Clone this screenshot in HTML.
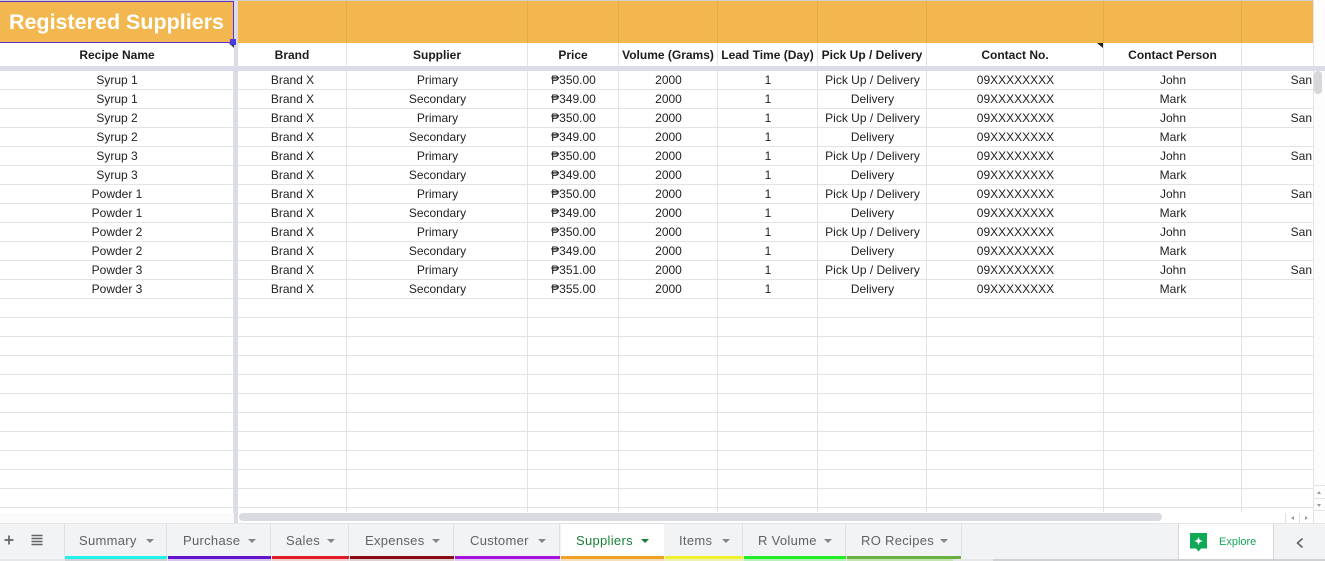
<!DOCTYPE html>
<html><head><meta charset="utf-8">
<style>
html,body{margin:0;padding:0;width:1325px;height:561px;overflow:hidden;background:#fff;font-family:"Liberation Sans",sans-serif}
.a{position:absolute}
#t{position:absolute;left:0;top:71px;border-collapse:separate;border-spacing:0;table-layout:fixed;width:1313px;font-size:12px;color:#222}
#t td{height:18px;padding:0 0 0 1px;border-bottom:1px solid #e2e3e3;border-right:1px solid #e2e3e3;text-align:center;line-height:18px;overflow:hidden;white-space:nowrap}
#t td.f{border-right:0;border-bottom:0;background:#dadce9;padding:0}
#t td.s{text-align:right;padding:0 1px 0 0;border-right:0}
#t tr.e td{height:5px;line-height:5px;border-bottom:0}
.v{position:absolute;width:1px}
.h{position:absolute;top:44px;height:23px;line-height:22px;font-size:12px;font-weight:bold;color:#1c1c1c;text-align:center;white-space:nowrap}
.tab{position:absolute;top:524px;height:32px;line-height:33px;color:#5f6368;background:#f1f3f4;border-right:1px solid #dfe1e4;white-space:nowrap;font-size:13px;letter-spacing:.3px;box-sizing:border-box}
.tab b{position:absolute;bottom:-3px;left:0;right:-1px;height:3px}
.tab i{position:absolute;top:15px;width:0;height:0;border-left:4px solid transparent;border-right:4px solid transparent;border-top:4px solid #80868b}
.tab span{position:absolute;top:0}
</style></head><body>
<div class="a" style="left:0;top:0;width:1313px;height:1px;background:#d0d0d0"></div>
<div class="a" style="left:0;top:1px;width:1313px;height:42px;background:#f2b84f"></div>
<div class="v" style="left:346px;top:1px;height:42px;background:#e0ac4b"></div>
<div class="v" style="left:527px;top:1px;height:42px;background:#e0ac4b"></div>
<div class="v" style="left:618px;top:1px;height:42px;background:#e0ac4b"></div>
<div class="v" style="left:717px;top:1px;height:42px;background:#e0ac4b"></div>
<div class="v" style="left:817px;top:1px;height:42px;background:#e0ac4b"></div>
<div class="v" style="left:926px;top:1px;height:42px;background:#e0ac4b"></div>
<div class="v" style="left:1103px;top:1px;height:42px;background:#e0ac4b"></div>
<div class="v" style="left:1241px;top:1px;height:42px;background:#e0ac4b"></div>

<div class="h" style="left:0;width:234px">Recipe Name</div>
<div class="h" style="left:238px;width:108px">Brand</div>
<div class="h" style="left:347px;width:180px">Supplier</div>
<div class="h" style="left:528px;width:90px">Price</div>
<div class="h" style="left:619px;width:98px">Volume (Grams)</div>
<div class="h" style="left:718px;width:99px">Lead Time (Day)</div>
<div class="h" style="left:818px;width:108px">Pick Up / Delivery</div>
<div class="h" style="left:927px;width:176px">Contact No.</div>
<div class="h" style="left:1104px;width:137px">Contact Person</div>
<div class="v" style="left:346px;top:43px;height:23px;background:#e2e3e3"></div>
<div class="v" style="left:527px;top:43px;height:23px;background:#e2e3e3"></div>
<div class="v" style="left:618px;top:43px;height:23px;background:#e2e3e3"></div>
<div class="v" style="left:717px;top:43px;height:23px;background:#e2e3e3"></div>
<div class="v" style="left:817px;top:43px;height:23px;background:#e2e3e3"></div>
<div class="v" style="left:926px;top:43px;height:23px;background:#e2e3e3"></div>
<div class="v" style="left:1103px;top:43px;height:23px;background:#e2e3e3"></div>
<div class="v" style="left:1241px;top:43px;height:23px;background:#e2e3e3"></div>
<div class="a" style="left:0;top:66px;width:1313px;height:5px;background:#dadce9"></div>

<table id="t"><colgroup><col style="width:234px"><col style="width:4px"><col style="width:109px"><col style="width:181px"><col style="width:91px"><col style="width:99px"><col style="width:100px"><col style="width:109px"><col style="width:177px"><col style="width:138px"><col style="width:71px"></colgroup>
<tr><td>Syrup 1</td><td class="f"></td><td>Brand X</td><td>Primary</td><td>₱350.00</td><td>2000</td><td>1</td><td>Pick Up / Delivery</td><td>09XXXXXXXX</td><td>John</td><td class="s">San</td></tr>
<tr><td>Syrup 1</td><td class="f"></td><td>Brand X</td><td>Secondary</td><td>₱349.00</td><td>2000</td><td>1</td><td>Delivery</td><td>09XXXXXXXX</td><td>Mark</td><td class="s"></td></tr>
<tr><td>Syrup 2</td><td class="f"></td><td>Brand X</td><td>Primary</td><td>₱350.00</td><td>2000</td><td>1</td><td>Pick Up / Delivery</td><td>09XXXXXXXX</td><td>John</td><td class="s">San</td></tr>
<tr><td>Syrup 2</td><td class="f"></td><td>Brand X</td><td>Secondary</td><td>₱349.00</td><td>2000</td><td>1</td><td>Delivery</td><td>09XXXXXXXX</td><td>Mark</td><td class="s"></td></tr>
<tr><td>Syrup 3</td><td class="f"></td><td>Brand X</td><td>Primary</td><td>₱350.00</td><td>2000</td><td>1</td><td>Pick Up / Delivery</td><td>09XXXXXXXX</td><td>John</td><td class="s">San</td></tr>
<tr><td>Syrup 3</td><td class="f"></td><td>Brand X</td><td>Secondary</td><td>₱349.00</td><td>2000</td><td>1</td><td>Delivery</td><td>09XXXXXXXX</td><td>Mark</td><td class="s"></td></tr>
<tr><td>Powder 1</td><td class="f"></td><td>Brand X</td><td>Primary</td><td>₱350.00</td><td>2000</td><td>1</td><td>Pick Up / Delivery</td><td>09XXXXXXXX</td><td>John</td><td class="s">San</td></tr>
<tr><td>Powder 1</td><td class="f"></td><td>Brand X</td><td>Secondary</td><td>₱349.00</td><td>2000</td><td>1</td><td>Delivery</td><td>09XXXXXXXX</td><td>Mark</td><td class="s"></td></tr>
<tr><td>Powder 2</td><td class="f"></td><td>Brand X</td><td>Primary</td><td>₱350.00</td><td>2000</td><td>1</td><td>Pick Up / Delivery</td><td>09XXXXXXXX</td><td>John</td><td class="s">San</td></tr>
<tr><td>Powder 2</td><td class="f"></td><td>Brand X</td><td>Secondary</td><td>₱349.00</td><td>2000</td><td>1</td><td>Delivery</td><td>09XXXXXXXX</td><td>Mark</td><td class="s"></td></tr>
<tr><td>Powder 3</td><td class="f"></td><td>Brand X</td><td>Primary</td><td>₱351.00</td><td>2000</td><td>1</td><td>Pick Up / Delivery</td><td>09XXXXXXXX</td><td>John</td><td class="s">San</td></tr>
<tr><td>Powder 3</td><td class="f"></td><td>Brand X</td><td>Secondary</td><td>₱355.00</td><td>2000</td><td>1</td><td>Delivery</td><td>09XXXXXXXX</td><td>Mark</td><td class="s"></td></tr>
<tr><td></td><td class="f"></td><td></td><td></td><td></td><td></td><td></td><td></td><td></td><td></td><td class="s"></td></tr>
<tr><td></td><td class="f"></td><td></td><td></td><td></td><td></td><td></td><td></td><td></td><td></td><td class="s"></td></tr>
<tr><td></td><td class="f"></td><td></td><td></td><td></td><td></td><td></td><td></td><td></td><td></td><td class="s"></td></tr>
<tr><td></td><td class="f"></td><td></td><td></td><td></td><td></td><td></td><td></td><td></td><td></td><td class="s"></td></tr>
<tr><td></td><td class="f"></td><td></td><td></td><td></td><td></td><td></td><td></td><td></td><td></td><td class="s"></td></tr>
<tr><td></td><td class="f"></td><td></td><td></td><td></td><td></td><td></td><td></td><td></td><td></td><td class="s"></td></tr>
<tr><td></td><td class="f"></td><td></td><td></td><td></td><td></td><td></td><td></td><td></td><td></td><td class="s"></td></tr>
<tr><td></td><td class="f"></td><td></td><td></td><td></td><td></td><td></td><td></td><td></td><td></td><td class="s"></td></tr>
<tr><td></td><td class="f"></td><td></td><td></td><td></td><td></td><td></td><td></td><td></td><td></td><td class="s"></td></tr>
<tr><td></td><td class="f"></td><td></td><td></td><td></td><td></td><td></td><td></td><td></td><td></td><td class="s"></td></tr>
<tr><td></td><td class="f"></td><td></td><td></td><td></td><td></td><td></td><td></td><td></td><td></td><td class="s"></td></tr>
<tr class="e"><td></td><td class="f"></td><td></td><td></td><td></td><td></td><td></td><td></td><td></td><td></td><td class="s"></td></tr>
</table>

<!-- freeze pane column -->
<div class="a" style="left:234px;top:1px;width:4px;height:42px;background:#dadce9"></div>
<div class="a" style="left:234px;top:43px;width:4px;height:480px;background:#dadce9"></div>

<!-- title cell -->
<div class="a" style="left:0;top:1px;width:233px;height:40px;border-top:1px solid #5b2fd0;border-bottom:1px solid #5b2fd0;border-right:1px solid #5b2fd0;background:#f2b84f;color:#fff;font-weight:bold;font-size:21.5px;line-height:41px;text-align:center;white-space:nowrap;box-sizing:content-box">Registered Suppliers</div>
<div class="a" style="left:230px;top:39px;width:6px;height:6px;background:#4d3be0;z-index:3"></div>
<div class="a" style="left:229px;top:43px;width:0;height:0;border-top:5px solid #333;border-left:5px solid transparent;z-index:2"></div>
<div class="a" style="left:1097px;top:43px;width:0;height:0;border-top:5px solid #222;border-left:6px solid transparent"></div>

<!-- bottom scroll area -->
<div class="a" style="left:0;top:513px;width:234px;height:10px;background:#fbfbfb"></div>
<div class="a" style="left:238px;top:512px;width:1075px;height:11px;background:#fff"></div>
<div class="a" style="left:239px;top:513px;width:923px;height:8px;border-radius:4px;background:#dadbe0"></div>

<!-- right scrollbar -->
<div class="a" style="left:1313px;top:0;width:12px;height:523px;background:#fdfdfd;border-left:1px solid #e4e4e4;box-sizing:border-box"></div>
<div class="a" style="left:1313px;top:66px;width:12px;height:5px;background:#dadce9"></div>
<div class="a" style="left:1314px;top:71px;width:8px;height:23px;border-radius:4px;background:#d6d7db"></div>
<div class="a" style="left:1313px;top:485px;width:12px;height:1px;background:#e4e4e4"></div>
<div class="a" style="left:1313px;top:498px;width:12px;height:1px;background:#e4e4e4"></div>
<div class="a" style="left:1313px;top:510px;width:12px;height:1px;background:#e4e4e4"></div>
<div class="a" style="left:1317px;top:491px;width:0;height:0;border-left:2px solid transparent;border-right:2px solid transparent;border-bottom:3px solid #999"></div>
<div class="a" style="left:1317px;top:504px;width:0;height:0;border-left:2px solid transparent;border-right:2px solid transparent;border-top:3px solid #999"></div>
<div class="a" style="left:1285px;top:513px;width:1px;height:10px;background:#e0e0e0"></div>
<div class="a" style="left:1299px;top:513px;width:1px;height:10px;background:#e0e0e0"></div>
<div class="a" style="left:1313px;top:513px;width:1px;height:10px;background:#e0e0e0"></div>
<div class="a" style="left:1291px;top:516px;width:0;height:0;border-top:2px solid transparent;border-bottom:2px solid transparent;border-right:3px solid #999"></div>
<div class="a" style="left:1305px;top:516px;width:0;height:0;border-top:2px solid transparent;border-bottom:2px solid transparent;border-left:3px solid #999"></div>

<!-- bottom bar -->
<div class="a" style="left:0;top:523px;width:1325px;height:38px;background:#f1f3f4;border-top:1px solid #e4e5e7;box-sizing:border-box"></div>
<div class="a" style="left:0;top:559px;width:993px;height:2px;background:#e6e7e9"></div>
<div class="a" style="left:993px;top:559px;width:332px;height:2px;background:#cfd1d4"></div>
<svg class="a" style="left:4px;top:535px" width="10" height="10" viewBox="0 0 10 10"><path d="M5 0.500v9M0.500 5h9" stroke="#5f6368" stroke-width="1.700" fill="none"/></svg>
<svg class="a" style="left:31px;top:534px" width="12" height="12" viewBox="0 0 12 12"><path d="M0.500 1.500h11M0.500 4.500h11M0.500 7.500h11M0.500 10.500h11" stroke="#5f6368" stroke-width="1.600" fill="none"/></svg>

<div class="tab" style="left:64px;width:103px;border-left:1px solid #dfe1e4"><span style="left:14px">Summary</span><i style="left:81px"></i><b style="background:#23f1ec;box-shadow:0 2px 0 #cfd2d4"></b></div>
<div class="tab" style="left:168px;width:103px"><span style="left:15px">Purchase</span><i style="left:80px"></i><b style="background:#6611cc;box-shadow:0 2px 0 #d5c4ee"></b></div>
<div class="tab" style="left:272px;width:77px"><span style="left:14px">Sales</span><i style="left:55px"></i><b style="background:#e01b22;box-shadow:0 2px 0 #f0d0d0"></b></div>
<div class="tab" style="left:350px;width:104px"><span style="left:15px">Expenses</span><i style="left:82px"></i><b style="background:#8b0a12;box-shadow:0 2px 0 #e0cfd0"></b></div>
<div class="tab" style="left:455px;width:105px"><span style="left:15px">Customer</span><i style="left:83px"></i><b style="background:#a312dd;box-shadow:0 2px 0 #e6c8f2"></b></div>
<div class="tab" style="left:561px;width:103px;background:#fff;color:#188038;border-right:0"><span style="left:15px">Suppliers</span><i style="left:80px;border-top-color:#188038"></i><b style="background:#f2a126;right:0;box-shadow:0 2px 0 #f6dfb8"></b></div>
<div class="tab" style="left:665px;width:78px"><span style="left:14px">Items</span><i style="left:57px"></i><b style="background:#eef22e;box-shadow:0 2px 0 #eef2b0"></b></div>
<div class="tab" style="left:744px;width:102px"><span style="left:14px">R Volume</span><i style="left:80px"></i><b style="background:#22ee26;box-shadow:0 2px 0 #b8f0ba"></b></div>
<div class="tab" style="left:847px;width:115px"><span style="left:14px">RO Recipes</span><i style="left:93px"></i><b style="background:#68b041;right:0"></b></div>
<div class="a" style="left:847px;top:559px;width:106px;height:2px;background:#c4e4b0"></div>

<div class="a" style="left:1178px;top:524px;width:96px;height:35px;background:#fff;border-left:1px solid #d5d7da;border-right:1px solid #d5d7da;box-sizing:border-box"></div>
<svg class="a" style="left:1190px;top:533px" width="17" height="19" viewBox="0 0 17 19"><path d="M0 0h17v15.500h-6L8.500 18.500 6 15.500H0z" fill="#0fa958"/><path d="M8.500 3.500C9 6.500 10 7.500 13 8 10 8.500 9 9.500 8.500 12.500 8 9.500 7 8.500 4 8 7 7.500 8 6.500 8.500 3.500z" fill="#fff"/></svg>
<div class="a" style="left:1219px;top:535px;font-size:11px;line-height:14px;color:#16a55b">Explore</div>
<svg class="a" style="left:1295px;top:537px" width="10" height="12" viewBox="0 0 10 12"><path d="M7.500 1.500L2.500 6l5 4.500" stroke="#5f6368" stroke-width="1.600" fill="none"/></svg>
</body></html>
